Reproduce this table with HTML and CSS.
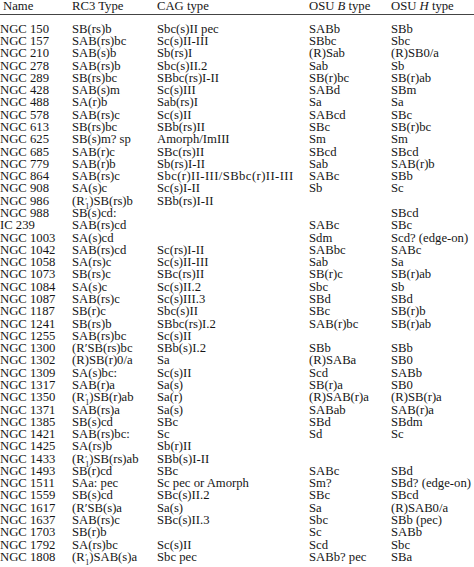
FILE: index.html
```html
<!DOCTYPE html>
<html>
<head>
<meta charset="utf-8">
<link rel="stylesheet" href="styles.css">
</head>
<body>
<div class="tbl">
  <div class="grid head">
    <span class="name-h">Name</span><span>RC3 Type</span><span>CAG type</span><span>OSU <i>B</i> type</span><span>OSU <i>H</i> type</span>
  </div>
  <div class="rule"></div>
  <div class="grid body">
    <span>NGC 150</span><span>SB(rs)b</span><span>Sbc(s)II pec</span><span>SABb</span><span>SBb</span>
    <span>NGC 157</span><span>SAB(rs)bc</span><span>Sc(s)II-III</span><span>SBbc</span><span>Sbc</span>
    <span>NGC 210</span><span>SAB(s)b</span><span>Sb(rs)I</span><span>(R)Sab</span><span>(R)SB0/a</span>
    <span>NGC 278</span><span>SAB(rs)b</span><span>Sbc(s)II.2</span><span>Sab</span><span>Sb</span>
    <span>NGC 289</span><span>SB(rs)bc</span><span>SBbc(rs)I-II</span><span>SB(r)bc</span><span>SB(r)ab</span>
    <span>NGC 428</span><span>SAB(s)m</span><span>Sc(s)III</span><span>SABd</span><span>SBm</span>
    <span>NGC 488</span><span>SA(r)b</span><span>Sab(rs)I</span><span>Sa</span><span>Sa</span>
    <span>NGC 578</span><span>SAB(rs)c</span><span>Sc(s)II</span><span>SABcd</span><span>SBc</span>
    <span>NGC 613</span><span>SB(rs)bc</span><span>SBb(rs)II</span><span>SBc</span><span>SB(r)bc</span>
    <span>NGC 625</span><span>SB(s)m? sp</span><span>Amorph/ImIII</span><span>Sm</span><span>Sm</span>
    <span>NGC 685</span><span>SAB(r)c</span><span>SBc(rs)II</span><span>SBcd</span><span>SBcd</span>
    <span>NGC 779</span><span>SAB(r)b</span><span>Sb(rs)I-II</span><span>Sab</span><span>SAB(r)b</span>
    <span>NGC 864</span><span>SAB(rs)c</span><span class="wide">Sbc(r)II-III/SBbc(r)II-III</span><span>SABc</span><span>SBb</span>
    <span>NGC 908</span><span>SA(s)c</span><span>Sc(s)I-II</span><span>Sb</span><span>Sc</span>
    <span>NGC 986</span><span>(R<span class="ps"><span>′</span><span>1</span></span>)SB(rs)b</span><span>SBb(rs)I-II</span><span></span><span></span>
    <span>NGC 988</span><span>SB(s)cd:</span><span></span><span></span><span>SBcd</span>
    <span>IC 239</span><span>SAB(rs)cd</span><span></span><span>SABc</span><span>SBc</span>
    <span>NGC 1003</span><span>SA(s)cd</span><span></span><span>Sdm</span><span>Scd? (edge-on)</span>
    <span>NGC 1042</span><span>SAB(rs)cd</span><span>Sc(rs)I-II</span><span>SABbc</span><span>SABc</span>
    <span>NGC 1058</span><span>SA(rs)c</span><span>Sc(s)II-III</span><span>Sab</span><span>Sa</span>
    <span>NGC 1073</span><span>SB(rs)c</span><span>SBc(rs)II</span><span>SB(r)c</span><span>SB(r)ab</span>
    <span>NGC 1084</span><span>SA(s)c</span><span>Sc(s)II.2</span><span>Sbc</span><span>Sb</span>
    <span>NGC 1087</span><span>SAB(rs)c</span><span>Sc(s)III.3</span><span>SBd</span><span>SBd</span>
    <span>NGC 1187</span><span>SB(r)c</span><span>Sbc(s)II</span><span>SBc</span><span>SB(r)b</span>
    <span>NGC 1241</span><span>SB(rs)b</span><span>SBbc(rs)I.2</span><span>SAB(r)bc</span><span>SB(r)ab</span>
    <span>NGC 1255</span><span>SAB(rs)bc</span><span>Sc(s)II</span><span></span><span></span>
    <span>NGC 1300</span><span>(R′SB(rs)bc</span><span>SBb(s)I.2</span><span>SBb</span><span>SBb</span>
    <span>NGC 1302</span><span>(R)SB(r)0/a</span><span>Sa</span><span>(R)SABa</span><span>SB0</span>
    <span>NGC 1309</span><span>SA(s)bc:</span><span>Sc(s)II</span><span>Scd</span><span>SABb</span>
    <span>NGC 1317</span><span>SAB(r)a</span><span>Sa(s)</span><span>SB(r)a</span><span>SB0</span>
    <span>NGC 1350</span><span>(R<span class="ps"><span>′</span><span>1</span></span>)SB(r)ab</span><span>Sa(r)</span><span>(R)SAB(r)a</span><span>(R)SB(r)a</span>
    <span>NGC 1371</span><span>SAB(rs)a</span><span>Sa(s)</span><span>SABab</span><span>SAB(r)a</span>
    <span>NGC 1385</span><span>SB(s)cd</span><span>SBc</span><span>SBd</span><span>SBdm</span>
    <span>NGC 1421</span><span>SAB(rs)bc:</span><span>Sc</span><span>Sd</span><span>Sc</span>
    <span>NGC 1425</span><span>SA(rs)b</span><span>Sb(r)II</span><span></span><span></span>
    <span>NGC 1433</span><span>(R<span class="ps"><span>′</span><span>1</span></span>)SB(rs)ab</span><span>SBb(s)I-II</span><span></span><span></span>
    <span>NGC 1493</span><span>SB(r)cd</span><span>SBc</span><span>SABc</span><span>SBd</span>
    <span>NGC 1511</span><span>SAa: pec</span><span>Sc pec or Amorph</span><span>Sm?</span><span>SBd? (edge-on)</span>
    <span>NGC 1559</span><span>SB(s)cd</span><span>SBc(s)II.2</span><span>SBc</span><span>SBcd</span>
    <span>NGC 1617</span><span>(R′SB(s)a</span><span>Sa(s)</span><span>Sa</span><span>(R)SAB0/a</span>
    <span>NGC 1637</span><span>SAB(rs)c</span><span>SBc(s)II.3</span><span>Sbc</span><span>SBb (pec)</span>
    <span>NGC 1703</span><span>SB(r)b</span><span></span><span>Sc</span><span>SABb</span>
    <span>NGC 1792</span><span>SA(rs)bc</span><span>Sc(s)II</span><span>Scd</span><span>Sbc</span>
    <span>NGC 1808</span><span>(R<span class="ps"><span>′</span><span>1</span></span>)SAB(s)a</span><span>Sbc pec</span><span>SABb? pec</span><span>SBa</span>
  </div>
</div>
</body>
</html>
```

FILE: styles.css
```css
html, body {
  margin: 0;
  padding: 0;
  background: #ffffff;
}
body {
  width: 474px;
  height: 567px;
  overflow: hidden;
}
.tbl {
  font-family: "Liberation Serif", "Times New Roman", serif;
  font-size: 12.7px;
  line-height: 12.29px;
  color: #161616;
}
.grid {
  display: grid;
  grid-template-columns: 72px 85px 152px 82px 1fr;
  grid-auto-rows: 12.29px;
  white-space: nowrap;
}
.head {
  margin-top: -0.5px;
}
.name-h {
  padding-left: 3px;
}
.rule {
  height: 1px;
  background: #444;
  margin-top: 2px;
}
.body {
  margin-top: 8px;
}
.wide {
  letter-spacing: 0.4px;
}
.ps {
  display: inline-flex;
  flex-direction: column;
  font-size: 8px;
  line-height: 5px;
  vertical-align: 1px;
  margin-left: 0.5px;
}
```
